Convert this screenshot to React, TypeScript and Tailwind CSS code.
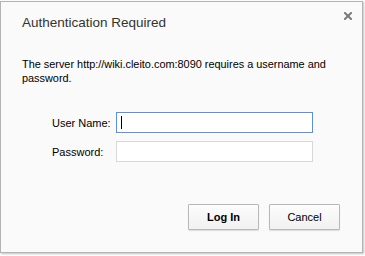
const font = { fontFamily: '"Liberation Sans", Arial, sans-serif' };

const CloseIcon = () => (
  <svg width="8" height="8" viewBox="0 0 8 8" className="block">
    <path d="M1 1 L7 7 M7 1 L1 7" stroke="#7a7a7a" strokeWidth="2" strokeLinecap="square" />
  </svg>
);

const Field = ({ label, focused }: { label: string; focused?: boolean }) => (
  <div className="flex items-center">
    <span className="w-[64px] text-[11px] leading-[14px] text-black">{label}</span>
    <div
      className={
        focused
          ? "flex h-[21px] w-[197px] items-center border border-[#5a8fe4] bg-white pl-[4px]"
          : "flex h-[21px] w-[197px] items-center border border-[#d8d8d8] bg-white pl-[4px]"
      }
    >
      {focused && <span className="h-[13px] w-px bg-black" />}
    </div>
  </div>
);

const Button = ({ children, bold }: { children: string; bold?: boolean }) => (
  <button
    className={
      (bold ? "font-bold " : "") +
      "h-[26px] w-[71px] rounded-[1px] border border-[#b8b8b8] bg-gradient-to-b from-[#fcfcfc] to-[#f1f1f1] text-[11px] text-black shadow-[0_1px_1px_rgba(0,0,0,0.12)]"
    }
    style={font}
  >
    {children}
  </button>
);

export default function App() {
  return (
    <div className="h-[256px] w-[365px] bg-white pt-px" style={font}>
      <div className="relative flex h-[252px] w-[363px] flex-col border border-[#b3b3b3] bg-[#fafafa] px-[21px] pt-[13px] shadow-[1px_1px_2px_rgba(0,0,0,0.25)]">
        {/* close button sits over the title row */}
        <button className="absolute right-[10px] top-[10px]">
          <CloseIcon />
        </button>

        <h1 className="text-[13.5px] font-normal leading-[16px] text-[#333]">Authentication Required</h1>

        <p className="mt-[26px] text-[10.9px] leading-[14px] text-black">
          The server http://wiki.cleito.com:8090 requires a username and password.
        </p>

        <div className="ml-[30px] mt-[27px] flex flex-col gap-[8px]">
          <Field label="User Name:" focused />
          <Field label="Password:" />
        </div>

        <div className="mt-[42px] flex justify-end gap-[10px] pr-[1px]">
          <Button bold>Log In</Button>
          <Button>Cancel</Button>
        </div>
      </div>
    </div>
  );
}
